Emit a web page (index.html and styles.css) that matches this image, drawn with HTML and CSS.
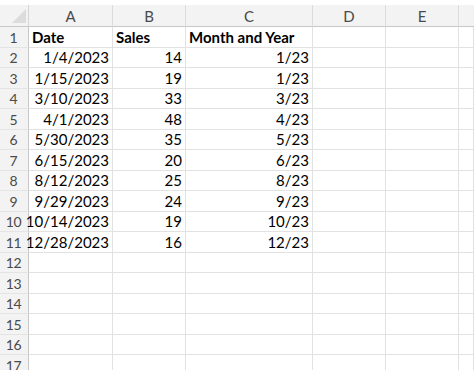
FILE: index.html
```html
<!DOCTYPE html>
<html>
<head>
<meta charset="utf-8">
<link rel="stylesheet" href="styles.css">
</head>
<body>
<div class="sheet">
  <div class="grid">
    <div class="corner"><svg width="16" height="16" viewBox="0 0 16 16"><polygon points="15,1 15,15 1,15" fill="#dcdcdc"/></svg></div>
    <div class="ch">A</div><div class="ch">B</div><div class="ch">C</div><div class="ch">D</div><div class="ch">E</div><div class="ch last"></div>

    <div class="rh">1</div><div class="c b">Date</div><div class="c b">Sales</div><div class="c b">Month and Year</div><div class="c"></div><div class="c"></div><div class="c"></div>
    <div class="rh">2</div><div class="c r">1/4/2023</div><div class="c r">14</div><div class="c r">1/23</div><div class="c"></div><div class="c"></div><div class="c"></div>
    <div class="rh">3</div><div class="c r">1/15/2023</div><div class="c r">19</div><div class="c r">1/23</div><div class="c"></div><div class="c"></div><div class="c"></div>
    <div class="rh">4</div><div class="c r">3/10/2023</div><div class="c r">33</div><div class="c r">3/23</div><div class="c"></div><div class="c"></div><div class="c"></div>
    <div class="rh">5</div><div class="c r">4/1/2023</div><div class="c r">48</div><div class="c r">4/23</div><div class="c"></div><div class="c"></div><div class="c"></div>
    <div class="rh">6</div><div class="c r">5/30/2023</div><div class="c r">35</div><div class="c r">5/23</div><div class="c"></div><div class="c"></div><div class="c"></div>
    <div class="rh">7</div><div class="c r">6/15/2023</div><div class="c r">20</div><div class="c r">6/23</div><div class="c"></div><div class="c"></div><div class="c"></div>
    <div class="rh">8</div><div class="c r">8/12/2023</div><div class="c r">25</div><div class="c r">8/23</div><div class="c"></div><div class="c"></div><div class="c"></div>
    <div class="rh">9</div><div class="c r">9/29/2023</div><div class="c r">24</div><div class="c r">9/23</div><div class="c"></div><div class="c"></div><div class="c"></div>
    <div class="rh">10</div><div class="c r">10/14/2023</div><div class="c r">19</div><div class="c r">10/23</div><div class="c"></div><div class="c"></div><div class="c"></div>
    <div class="rh">11</div><div class="c r">12/28/2023</div><div class="c r">16</div><div class="c r">12/23</div><div class="c"></div><div class="c"></div><div class="c"></div>
    <div class="rh">12</div><div class="c"></div><div class="c"></div><div class="c"></div><div class="c"></div><div class="c"></div><div class="c"></div>
    <div class="rh">13</div><div class="c"></div><div class="c"></div><div class="c"></div><div class="c"></div><div class="c"></div><div class="c"></div>
    <div class="rh">14</div><div class="c"></div><div class="c"></div><div class="c"></div><div class="c"></div><div class="c"></div><div class="c"></div>
    <div class="rh">15</div><div class="c"></div><div class="c"></div><div class="c"></div><div class="c"></div><div class="c"></div><div class="c"></div>
    <div class="rh">16</div><div class="c"></div><div class="c"></div><div class="c"></div><div class="c"></div><div class="c"></div><div class="c"></div>
    <div class="rh">17</div><div class="c"></div><div class="c"></div><div class="c"></div><div class="c"></div><div class="c"></div><div class="c"></div>
  </div>
</div>
</body>
</html>
```
FILE: styles.css
```css
html, body {
  margin: 0;
  padding: 0;
  background: #ffffff;
  overflow: hidden;
}
.sheet {
  width: 474px;
  height: 370px;
  overflow: hidden;
  padding-top: 5px;
  box-sizing: border-box;
  font-family: Lato, "Open Sans", sans-serif;
  font-size: 15px;
  color: #000;
}
.grid {
  display: grid;
  grid-template-columns: 29px 84px 73px 127px 73px 73px 1fr;
  grid-template-rows: 22px;
  grid-auto-rows: 20.5px;
}
.corner {
  background: #f3f3f3;
  border-right: 1px solid #d4d4d4;
  border-bottom: 1px solid #c8c8c8;
  box-sizing: border-box;
  display: flex;
  align-items: flex-end;
  justify-content: flex-end;
  padding: 0 1px 2px 0;
}
.corner svg { display: block; }
.ch {
  background: #f3f3f3;
  border-right: 1px solid #dcdcdc;
  border-bottom: 1px solid #c8c8c8;
  box-sizing: border-box;
  display: flex;
  align-items: center;
  justify-content: center;
  color: #4a4a4a;
  font-size: 15px;
  padding-top: 1px;
}
.ch.last { border-right: none; }
.rh {
  background: #f3f3f3;
  border-right: 1px solid #c8c8c8;
  border-bottom: 1px solid #e4e4e4;
  box-sizing: border-box;
  display: flex;
  align-items: flex-end;
  justify-content: center;
  color: #4a4a4a;
  font-size: 14px;
  letter-spacing: -0.3px;
  padding: 0 1px 1px 0;
}
.c {
  border-right: 1px solid #e2e2e2;
  border-bottom: 1px solid #e2e2e2;
  box-sizing: border-box;
  display: flex;
  align-items: flex-end;
  padding: 0 3px 1px 3px;
  white-space: nowrap;
  overflow: visible;
}
.c.r { justify-content: flex-end; }
.c.b { font-weight: bold; }
```
